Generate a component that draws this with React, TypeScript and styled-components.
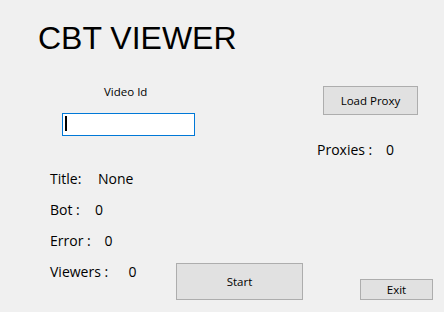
import styled, { createGlobalStyle } from 'styled-components'

const GlobalStyle = createGlobalStyle`
  html, body {
    margin: 0;
    padding: 0;
    background: #f0f0f0;
  }
  * {
    box-sizing: border-box;
  }
`

const Window = styled.div`
  width: 444px;
  height: 312px;
  background: #f0f0f0;
  display: flex;
  flex-direction: column;
  font-family: "Open Sans", "Noto Sans", sans-serif;
  color: #000;
  overflow: hidden;
`

const Heading = styled.h1`
  margin: 22px 0 0 38px;
  font-family: "Liberation Sans", Arial, sans-serif;
  font-weight: 400;
  font-size: 32px;
  line-height: 32px;
`

const TopRow = styled.div`
  margin-top: 30px;
  padding: 0 26px 0 62px;
  display: flex;
  justify-content: space-between;
  height: 76px;
`

const VideoField = styled.div`
  width: 133px;
  display: flex;
  flex-direction: column;
`

const FieldLabel = styled.label`
  margin-left: 42px;
  font-size: 11.5px;
  line-height: 16px;
`

const TextBox = styled.div`
  margin-top: 13px;
  width: 133px;
  height: 23px;
  background: #fff;
  border: 1px solid #0078d7;
  padding: 2px 0 0 2px;
`

const Caret = styled.span`
  display: block;
  width: 2px;
  height: 15px;
  background: #000;
`

const ProxyPanel = styled.div`
  width: 101px;
  display: flex;
  flex-direction: column;
`

const Button = styled.button<{ $w: number; $h: number }>`
  width: ${p => p.$w}px;
  height: ${p => p.$h}px;
  padding: 0;
  background: #e1e1e1;
  border: 1px solid #adadad;
  border-radius: 0;
  font-family: "Open Sans", "Noto Sans", sans-serif;
  font-size: 11.5px;
  color: #000;
  display: flex;
  align-items: center;
  justify-content: center;
  flex-shrink: 0;
`

const LoadButton = styled(Button)`
  margin: 2px 0 0 6px;
`

const StatLine = styled.div`
  display: flex;
  font-size: 14px;
  line-height: 20px;
  white-space: pre;
`

const ProxyLine = styled(StatLine)`
  margin-top: 25px;
`

const Key = styled.span<{ $w: number }>`
  width: ${p => p.$w}px;
  flex-shrink: 0;
`

const BottomRow = styled.div`
  margin-top: 3px;
  padding: 0 11px 0 50px;
  display: flex;
  align-items: flex-end;
`

const Stats = styled.div`
  width: 126px;
  margin-bottom: 13px;
  display: flex;
  flex-direction: column;
`

const StatRow = styled(StatLine)`
  line-height: 31px;
`

const Spacer = styled.div`
  flex: 1;
`

const stats = [
  { key: 'Title:', value: 'None', w: 48 },
  { key: 'Bot :', value: '0', w: 45 },
  { key: 'Error :', value: '0', w: 54.5 },
  { key: 'Viewers :', value: '0', w: 78.5 },
]

export default function App() {
  return (
    <>
      <GlobalStyle />
      <Window>
        <Heading>CBT VIEWER</Heading>
        <TopRow>
          <VideoField>
            <FieldLabel>Video Id</FieldLabel>
            <TextBox>
              <Caret />
            </TextBox>
          </VideoField>
          <ProxyPanel>
            <LoadButton $w={95} $h={29}>Load Proxy</LoadButton>
            <ProxyLine>
              <Key $w={69}>Proxies :</Key>
              <span>0</span>
            </ProxyLine>
          </ProxyPanel>
        </TopRow>
        <BottomRow>
          <Stats>
            {stats.map(s => (
              <StatRow key={s.key}>
                <Key $w={s.w}>{s.key}</Key>
                <span>{s.value}</span>
              </StatRow>
            ))}
          </Stats>
          <Button $w={127} $h={37}>Start</Button>
          <Spacer />
          <Button $w={73} $h={21}>Exit</Button>
        </BottomRow>
      </Window>
    </>
  )
}
